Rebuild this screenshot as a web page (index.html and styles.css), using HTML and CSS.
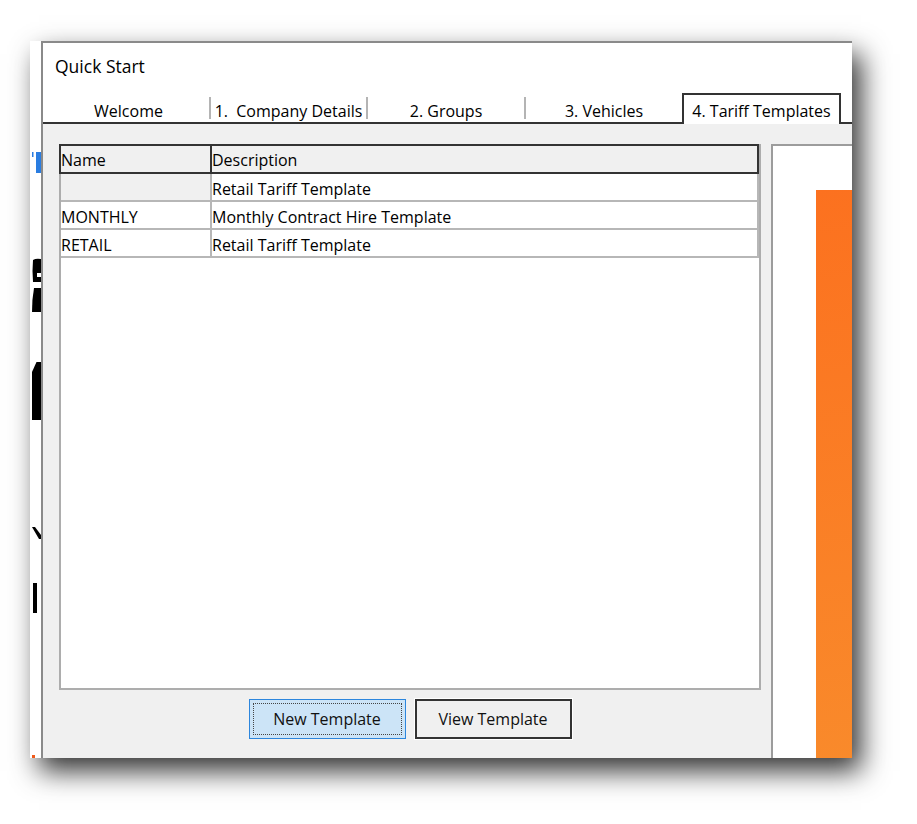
FILE: index.html
```html
<!DOCTYPE html>
<html>
<head>
<meta charset="utf-8">
<link rel="stylesheet" href="styles.css">
</head>
<body>
<div class="stage">
  <div class="shot">
    <div class="under">
      <svg class="under-art" width="11" height="717" viewBox="0 0 11 717">
        <rect x="2" y="111" width="1.5" height="5" fill="#2a7de1"/>
        <rect x="6" y="111" width="5" height="21" fill="#2a7de1"/>
        <path d="M3 219 Q6 217 11 218 V232 H7 V236 H11 V241 H3 Q2 230 3 219 Z" fill="#000"/>
        <path d="M4 247 H11 V271 H2 Q2 258 4 247 Z" fill="#000"/>
        <path d="M6.5 321 H11 V379 H2 V331 Z" fill="#000"/>
        <path d="M2 486 L5 486 L11 494 L11 498 L9 498 Z" fill="#000"/>
        <rect x="3" y="542" width="4" height="30" fill="#000"/>
        <rect x="2" y="714" width="3" height="3" fill="#f05a1a"/>
      </svg>
    </div>
    <div class="window">
      <div class="titlebar">Quick Start</div>
      <div class="tabbar">
        <div class="tab t1">Welcome</div>
        <div class="sep"></div>
        <div class="tab t2">1.&nbsp; Company Details</div>
        <div class="sep"></div>
        <div class="tab t3">2. Groups</div>
        <div class="sep"></div>
        <div class="tab t4">3. Vehicles</div>
        <div class="tab active">4. Tariff Templates</div>
      </div>
      <div class="panel">
        <div class="main">
          <div class="list">
            <div class="row head">
              <div class="cell name">Name</div>
              <div class="cell desc">Description</div>
            </div>
            <div class="row">
              <div class="cell name blank"></div>
              <div class="cell desc">Retail Tariff Template</div>
            </div>
            <div class="row">
              <div class="cell name">MONTHLY</div>
              <div class="cell desc">Monthly Contract Hire Template</div>
            </div>
            <div class="row">
              <div class="cell name">RETAIL</div>
              <div class="cell desc">Retail Tariff Template</div>
            </div>
          </div>
          <div class="buttons">
            <button class="btn focused"><span class="focus-ring">New Template</span></button>
            <button class="btn default">View Template</button>
          </div>
        </div>
        <div class="side">
          <div class="orange"></div>
        </div>
      </div>
    </div>
  </div>
</div>
</body>
</html>
```

FILE: styles.css
```css
html, body {
  margin: 0;
  padding: 0;
  background: #ffffff;
}

body {
  font-family: "Open Sans", "Noto Sans", sans-serif;
  color: #000;
  min-height: 824px;
}

.stage {
  padding: 41px 0 0 30px;
}

.shot {
  display: flex;
  width: 822px;
  height: 717px;
  box-shadow: 9px 13px 26px rgba(0, 0, 0, 0.8);
}

.under {
  width: 11px;
  flex: none;
  background: #ffffff;
  overflow: hidden;
}

.under-art {
  display: block;
}

.window {
  width: 811px;
  flex: none;
  box-sizing: border-box;
  border-top: 2px solid #8a8a8a;
  border-left: 2px solid #8a8a8a;
  background: #f0f0f0;
  display: flex;
  flex-direction: column;
  overflow: hidden;
}

.titlebar {
  height: 50px;
  flex: none;
  box-sizing: border-box;
  background: #ffffff;
  padding: 11px 0 0 12px;
  font-size: 17.5px;
  line-height: 24px;
}

.tabbar {
  height: 31px;
  flex: none;
  box-sizing: border-box;
  background: #ffffff;
  border-bottom: 2px solid #333333;
  display: flex;
  padding-left: 5px;
  font-size: 16px;
  line-height: 20px;
}

.tab {
  flex: none;
  box-sizing: border-box;
  padding-top: 8px;
  text-align: center;
  white-space: nowrap;
}

.t1 { width: 161px; }
.t2 { width: 155px; }
.t3 { width: 156px; }
.t4 { width: 156px; }

.sep {
  flex: none;
  width: 2px;
  height: 22px;
  margin-top: 4px;
  background: #b4b4b4;
}

.tab.active {
  width: 159px;
  height: 31px;
  margin-bottom: -2px;
  border: 2px solid #333333;
  border-bottom: none;
  padding-top: 6px;
  background: #ffffff;
}

.panel {
  flex: 1;
  display: flex;
  padding: 20px 0 0 16px;
  background: #f0f0f0;
  min-height: 0;
}

.main {
  width: 702px;
  flex: none;
  margin-right: 10px;
}

.list {
  height: 546px;
  box-sizing: border-box;
  border: 2px solid #adadad;
  background: #ffffff;
}

.row {
  display: flex;
  height: 28px;
  font-size: 16px;
  line-height: 20px;
}

.cell {
  box-sizing: border-box;
  border-right: 2px solid #b7b7b7;
  border-bottom: 2px solid #b7b7b7;
  padding-top: 5px;
  white-space: nowrap;
  overflow: hidden;
}

.cell.name {
  width: 151px;
  flex: none;
}

.cell.desc {
  flex: 1;
}

.cell.blank {
  background: #f0f0f0;
}

.row.head {
  height: 30px;
  box-sizing: border-box;
  margin: -2px 0 0 -2px;
  border: 2px solid #333333;
  background: #f0f0f0;
}

.row.head .cell {
  border-bottom: none;
  padding-top: 4px;
}

.row.head .cell.name {
  border-right: 2px solid #333333;
}

.row.head .cell.desc {
  border-right: none;
}

.buttons {
  display: flex;
  justify-content: center;
  gap: 9px;
  margin-top: 9px;
}

.btn {
  width: 157px;
  height: 40px;
  box-sizing: border-box;
  margin: 0;
  font-family: "Open Sans", "Noto Sans", sans-serif;
  font-size: 16px;
  color: #111;
  cursor: default;
}

.btn.focused {
  background: #cce4f7;
  border: 1px solid #2c86dd;
  padding: 3px;
}

.focus-ring {
  display: block;
  height: 32px;
  box-sizing: border-box;
  border: 1px dotted #444;
  line-height: 30px;
}

.btn.default {
  background: #f0f0f0;
  border: 2px solid #333333;
  padding: 0;
  line-height: 36px;
  outline: 1px solid #ffffff;
}

.side {
  flex: 1;
  min-width: 0;
  display: flex;
  flex-direction: column;
  border-left: 2px solid #9c9c9c;
  border-top: 2px solid #9c9c9c;
  background: #ffffff;
  overflow: hidden;
}

.orange {
  flex: 1;
  width: 60px;
  margin: 44px 0 0 43px;
  background: linear-gradient(172deg, #fc711f 0%, #f98a2b 100%);
}
```
